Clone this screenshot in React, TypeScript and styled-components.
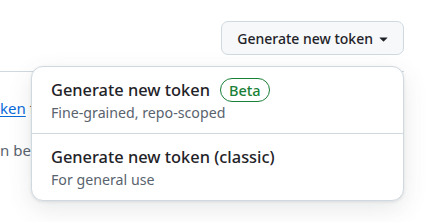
import React from "react";
import styled, { createGlobalStyle } from "styled-components";

const Global = createGlobalStyle`
  html, body { margin: 0; padding: 0; background: #ffffff; }
  body {
    font-family: "Noto Sans", "Open Sans", "Liberation Sans", sans-serif;
    color: #1f2328;
    width: 440px;
    height: 222px;
    overflow: hidden;
  }
`;

const Page = styled.div`
  position: relative;
  width: 440px;
  height: 222px;
  overflow: hidden;
`;

const Header = styled.div`
  display: flex;
  justify-content: flex-end;
  align-items: flex-start;
  padding: 21px 36px 0 0;
  height: 71px;
  box-sizing: border-box;
`;

const Button = styled.button`
  display: inline-flex;
  align-items: center;
  gap: 2px;
  height: 34px;
  padding: 0 11px 0 15px;
  border: 1px solid #d1d9e0;
  border-radius: 7px;
  background: #f6f8fa;
  color: #1f2328;
  font-family: inherit;
  font-size: 14px;
  font-weight: 500;
  cursor: pointer;
`;

const Section = styled.div`
  margin-right: 36px;
  border-top: 1px solid #d1d9e0;
  padding-top: 24px;
  display: flex;
  flex-direction: column;
  gap: 18px;
`;

const Line = styled.p<{ muted?: boolean }>`
  margin: 0;
  font-size: 15px;
  line-height: 24px;
  color: ${(p) => (p.muted ? "#59636e" : "#1f2328")};
  white-space: nowrap;
`;

const Link = styled.a`
  color: #0969da;
  text-decoration: underline;
  text-underline-offset: 2px;
`;

const Menu = styled.div`
  position: absolute;
  left: 31px;
  top: 66px;
  width: 373px;
  box-sizing: border-box;
  background: #ffffff;
  border: 1px solid #d1d9e0;
  border-radius: 12px;
  box-shadow: 0 8px 24px rgba(66, 74, 83, 0.12), 0 1px 3px rgba(31, 35, 40, 0.1);
  overflow: hidden;
`;

const Item = styled.div<{ divided?: boolean }>`
  display: flex;
  flex-direction: column;
  justify-content: center;
  height: 66px;
  padding: 0 19px;
  border-top: ${(p) => (p.divided ? "1px solid #d1d9e0" : "none")};
`;

const TitleRow = styled.div`
  display: flex;
  align-items: center;
  gap: 10px;
`;

const Title = styled.span`
  font-size: 16.4px;
  line-height: 26px;
  font-weight: 500;
  color: #1f2328;
`;

const Subtitle = styled.span`
  font-size: 14.2px;
  line-height: 20px;
  color: #59636e;
`;

const Badge = styled.span`
  display: inline-flex;
  align-items: center;
  height: 24px;
  box-sizing: border-box;
  padding: 0 8px;
  border: 1px solid #1a7f37;
  border-radius: 999px;
  color: #1a7f37;
  font-size: 14.5px;
  font-weight: 500;
`;

const Caret = () => (
  <svg width="17" height="17" viewBox="0 0 16 16" fill="#1f2328" aria-hidden>
    <path d="m4.427 7.427 3.396 3.396a.25.25 0 0 0 .354 0l3.396-3.396A.25.25 0 0 0 11.396 7H4.604a.25.25 0 0 0-.177.427Z" />
  </svg>
);

export default function App() {
  return (
    <Page>
      <Global />
      <Header>
        <Button>
          Generate new token
          <Caret />
        </Button>
      </Header>
      <Section>
        <Line>
          <Link>ken</Link> f
        </Line>
        <Line muted>n be u</Line>
      </Section>
      <Menu>
        <Item>
          <TitleRow>
            <Title>Generate new token</Title>
            <Badge>Beta</Badge>
          </TitleRow>
          <Subtitle>Fine-grained, repo-scoped</Subtitle>
        </Item>
        <Item divided>
          <Title>Generate new token (classic)</Title>
          <Subtitle>For general use</Subtitle>
        </Item>
      </Menu>
    </Page>
  );
}
